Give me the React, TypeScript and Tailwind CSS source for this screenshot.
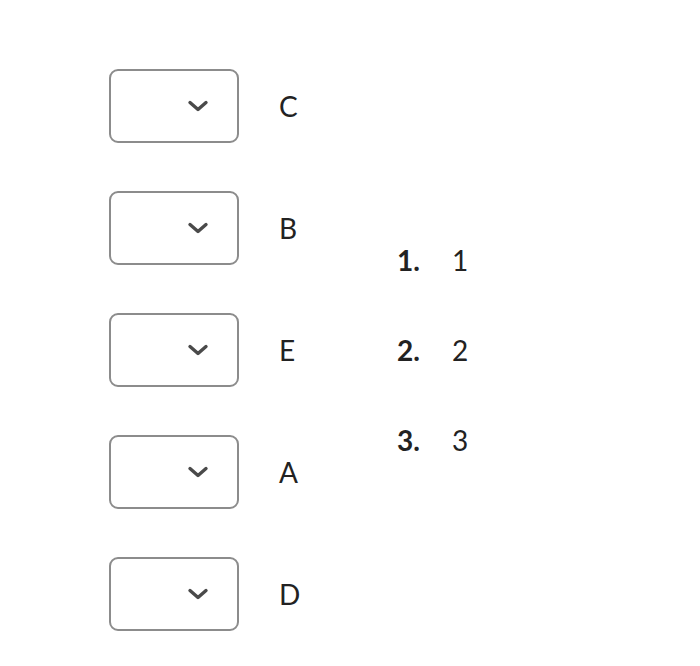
import React from "react";

const letters = ["C", "B", "E", "A", "D"];
const answers = ["1", "2", "3"];

function Chevron() {
  return (
    <svg width="22" height="13" viewBox="0 0 22 13" fill="none">
      <path d="M3 2.5 L11 9.5 L19 2.5" stroke="#4a4a4a" strokeWidth="3.4" strokeLinecap="round" strokeLinejoin="round" />
    </svg>
  );
}

function SelectBox() {
  return (
    <div className="w-[130px] h-[74px] rounded-[9px] border-2 border-[#8c8c8c] bg-white flex items-center justify-end pr-[28px]">
      <Chevron />
    </div>
  );
}

export default function App() {
  return (
    <div className="w-[700px] h-[666px] bg-white text-[#222] font-['Lato','Open_Sans',sans-serif] pl-[109px] pt-[69px]">
      <div className="flex items-center">
        {/* Matching column */}
        <div className="flex flex-col gap-[48px] w-[288px]">
          {letters.map((l) => (
            <div key={l} className="flex items-center gap-[40px]">
              <SelectBox />
              <span className="text-[28px] leading-none">{l}</span>
            </div>
          ))}
        </div>

        {/* Options list */}
        <ol className="flex flex-col gap-[60px]">
          {answers.map((a, i) => (
            <li key={a} className="flex items-center text-[28px] leading-[30px]">
              <span className="font-bold w-[55px]">{i + 1}.</span>
              <span>{a}</span>
            </li>
          ))}
        </ol>
      </div>
    </div>
  );
}
